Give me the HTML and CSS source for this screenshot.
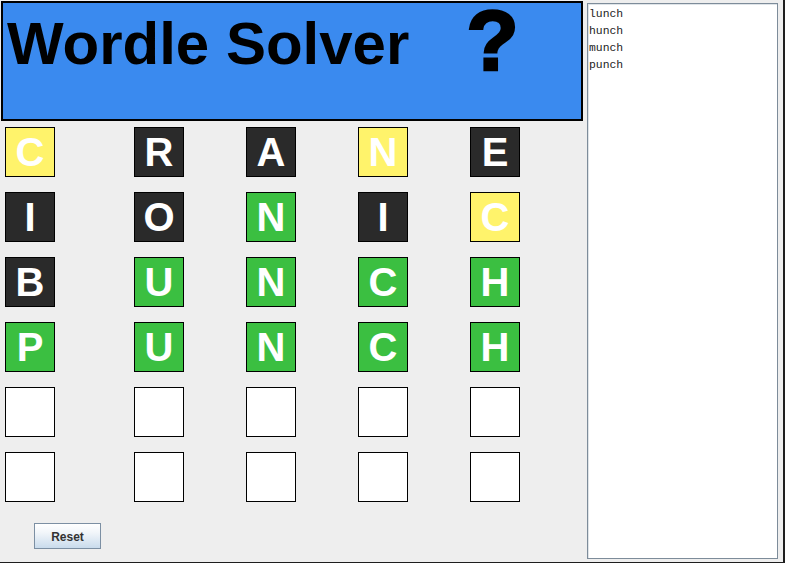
FILE: index.html
```html
<!DOCTYPE html>
<html lang="en">
<head>
<meta charset="utf-8">
<title>Wordle Solver</title>
<link rel="stylesheet" href="styles.css">
</head>
<body>
<div class="app">
  <div class="board">
    <div class="banner">
      <span class="title">Wordle Solver</span>
      <span class="mark">?</span>
    </div>
    <div class="grid">
      <div class="tile present">C</div>
      <div class="tile absent">R</div>
      <div class="tile absent">A</div>
      <div class="tile present">N</div>
      <div class="tile absent">E</div>

      <div class="tile absent">I</div>
      <div class="tile absent">O</div>
      <div class="tile correct">N</div>
      <div class="tile absent">I</div>
      <div class="tile present">C</div>

      <div class="tile absent">B</div>
      <div class="tile correct">U</div>
      <div class="tile correct">N</div>
      <div class="tile correct">C</div>
      <div class="tile correct">H</div>

      <div class="tile correct">P</div>
      <div class="tile correct">U</div>
      <div class="tile correct">N</div>
      <div class="tile correct">C</div>
      <div class="tile correct">H</div>

      <div class="tile"></div>
      <div class="tile"></div>
      <div class="tile"></div>
      <div class="tile"></div>
      <div class="tile"></div>

      <div class="tile"></div>
      <div class="tile"></div>
      <div class="tile"></div>
      <div class="tile"></div>
      <div class="tile"></div>
    </div>
    <button class="reset" type="button">Reset</button>
  </div>
  <div class="words">
    <div class="word">lunch</div>
    <div class="word">hunch</div>
    <div class="word">munch</div>
    <div class="word">punch</div>
  </div>
</div>
</body>
</html>
```

FILE: styles.css
```css
html, body {
  margin: 0;
  padding: 0;
  background: #eeeeee;
}

.app {
  width: 785px;
  height: 563px;
  box-sizing: border-box;
  display: flex;
  align-items: flex-start;
  border-right: 2px solid #1e1e1e;
  border-bottom: 1px solid #1e1e1e;
  overflow: hidden;
}

.board {
  width: 583px;
  flex: none;
  display: flex;
  flex-direction: column;
  align-items: flex-start;
}

.banner {
  margin: 1px 0 0 1px;
  width: 582px;
  height: 120px;
  box-sizing: border-box;
  border: 2px solid #000;
  background: #3a8aef;
  display: flex;
  align-items: flex-start;
  padding-left: 4px;
  font-family: "Liberation Sans", Arial, sans-serif;
  font-weight: bold;
  color: #000;
}

.title {
  font-size: 60px;
  line-height: 60px;
  margin-top: 11px;
}

.mark {
  font-size: 86px;
  line-height: 80px;
  margin-top: -3px;
  margin-left: 57px;
  -webkit-text-stroke: 2.5px #000;
}

.grid {
  margin: 6px 0 0 5px;
  display: grid;
  grid-template-columns: 129px 112px 112px 112px 50px;
  grid-auto-rows: 50px;
  row-gap: 15px;
}

.tile {
  width: 50px;
  height: 50px;
  box-sizing: border-box;
  border: 1px solid #000;
  background: #ffffff;
  display: flex;
  align-items: center;
  justify-content: center;
  font-family: "Liberation Sans", Arial, sans-serif;
  font-weight: bold;
  font-size: 40px;
  line-height: 1;
  color: #ffffff;
}

.tile.present { background: #fff36b; }
.tile.absent { background: #2a2a2a; }
.tile.correct { background: #3bbf41; }

.reset {
  margin: 21px 0 0 34px;
  width: 67px;
  height: 26px;
  box-sizing: border-box;
  border: 1px solid #7c8fa3;
  border-radius: 0;
  background: linear-gradient(#ffffff, #f2f6fa 35%, #c9dbec);
  font-family: "Liberation Sans", Arial, sans-serif;
  font-weight: bold;
  font-size: 12px;
  color: #333333;
  padding: 2px 0 0;
}

.words {
  margin: 3px 0 0 4px;
  width: 191px;
  height: 556px;
  box-sizing: border-box;
  border: 1px solid #7d8c9a;
  box-shadow: inset 1px 1px 0 #dfe4e8;
  background: #ffffff;
  padding: 2px 1px;
  font-family: "Liberation Mono", "Courier New", monospace;
  font-size: 11.4px;
  line-height: 17px;
  color: #222222;
}
```
